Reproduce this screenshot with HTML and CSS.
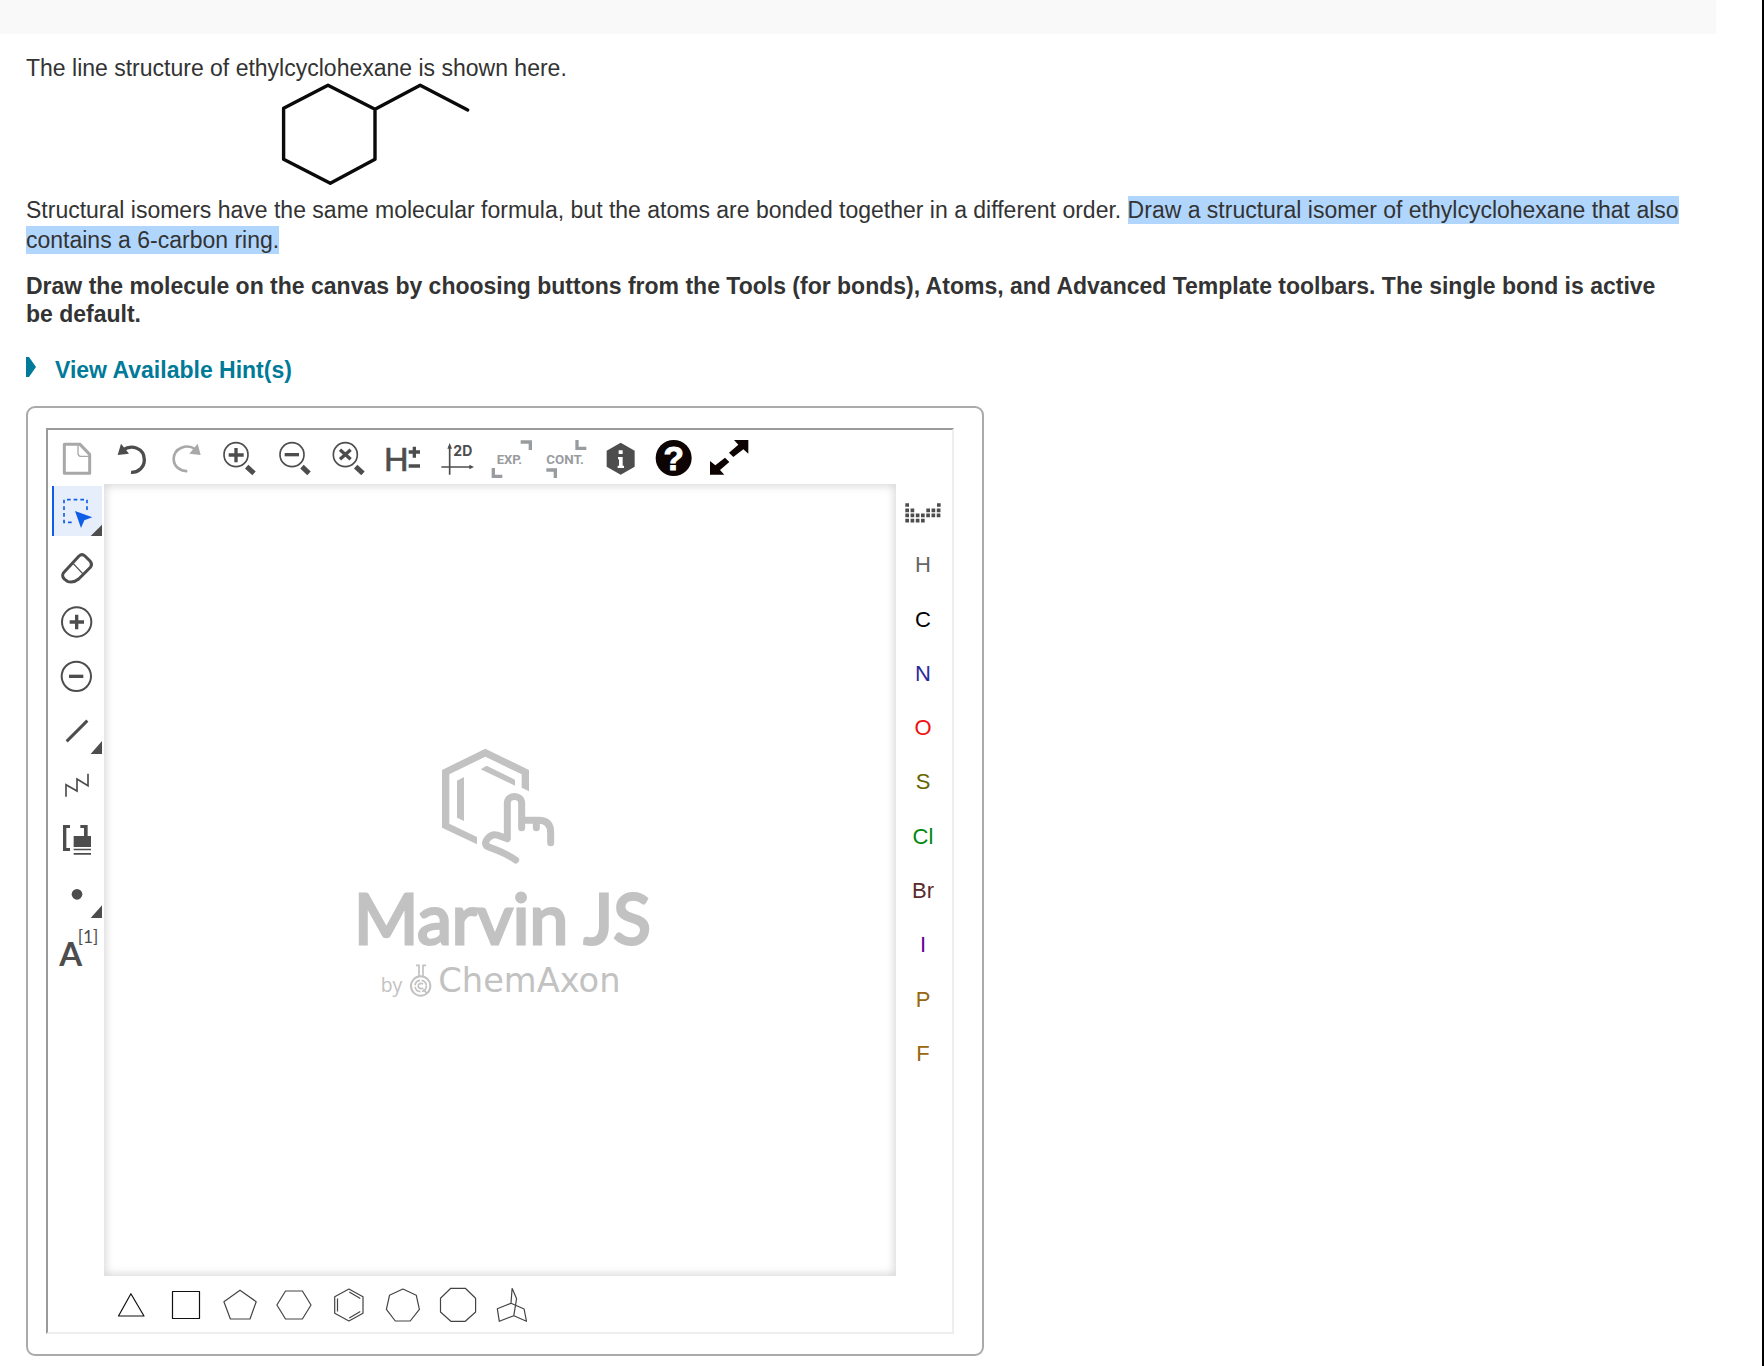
FILE: index.html
```html
<!DOCTYPE html>
<html lang="en">
<head>
<meta charset="utf-8">
<title>Structural isomers</title>
<link rel="stylesheet" href="styles.css">
</head>
<body>
<div class="page">
  <header class="band"></header>
  <main class="content">
    <p class="text">The line structure of ethylcyclohexane is shown here.</p>
    <svg class="molecule" viewBox="280 83 192 112" role="img" aria-label="Ethylcyclohexane">
      <path d="M375 109.3L328 85.3L283.6 108.3V159.3L330.3 183.3L375 159.3V109.3L420.2 85.3L467.7 110"/>
    </svg>
    <p class="text">Structural isomers have the same molecular formula, but the atoms are bonded together in a different order. <mark>Draw a structural isomer of ethylcyclohexane that also contains a 6-carbon ring.</mark></p>
    <p class="instructions">Draw the molecule on the canvas by choosing buttons from the Tools (for bonds), Atoms, and Advanced Template toolbars. The single bond is active be default.</p>
    <a class="hint" href="#hints"><svg class="hint-arrow" viewBox="0 0 10 20"><path d="M0 0L3 0L10 10L3 20H0Z"/></svg>View Available Hint(s)</a>

    <section class="panel">
      <div class="editor">
        <div class="toolbar" role="toolbar" aria-label="General">
          <button class="tool muted" aria-label="New"><svg viewBox="96 96 150 150"><path class="line" stroke-width="9" stroke-linejoin="round" d="M133 133H180L209 163V220H133Z"/><path class="line" stroke-width="4" d="M174 136V160Q174 169 182 169H208"/></svg></button>
          <button class="tool" aria-label="Undo"><svg viewBox="259 96 150 150"><path d="M294 165L304 131L328 161Z"/><path class="line" stroke-width="10" d="M310 150C335 133 374 143 374 180A38 37 0 0 1 334 217"/></svg></button>
          <button class="tool muted" aria-label="Redo"><svg viewBox="422 96 150 150"><path d="M541 165L532 131L507 161Z"/><path class="line" stroke-width="8" d="M524 147C500 131 461 143 460 177A38 36 0 0 0 501 213"/></svg></button>
          <button class="tool" aria-label="Zoom in"><svg viewBox="586 96 150 150"><circle class="line" cx="649" cy="164" r="36" stroke-width="5"/><path class="line" stroke-width="10" d="M627 165H672M649 144V187"/><path class="line" stroke-width="15" d="M681 200L703 220"/></svg></button>
          <button class="tool" aria-label="Zoom out"><svg viewBox="749 96 150 150"><circle class="line" cx="815" cy="164" r="36" stroke-width="5"/><path class="line" stroke-width="10" d="M793 164H836"/><path class="line" stroke-width="15" d="M845 200L866 220"/></svg></button>
          <button class="tool" aria-label="Zoom to fit"><svg viewBox="912 96 150 150"><circle class="line" cx="976" cy="164" r="36" stroke-width="5"/><path class="line" stroke-width="10" d="M960 149L992 178M992 149L960 178"/><path class="line" stroke-width="15" d="M1007 200L1029 220"/></svg></button>
          <button class="tool" aria-label="Explicit hydrogens"><svg viewBox="-64 96 150 150"><text class="arial heavy" x="-46" y="212" font-size="102">H</text><path class="line" stroke-width="10" d="M28 156H62M45 140V173M28 198H62"/></svg></button>
          <button class="tool" aria-label="Clean 2D"><svg viewBox="99 96 150 150"><path class="line" stroke-width="5" d="M149 140V224M124 201H212"/><path d="M142 146L149 129L156 146ZM208 194L222 201L208 208Z"/><text class="inter" x="160" y="169" font-size="42">2D</text></svg></button>
          <button class="tool cool" aria-label="Expand groups"><svg viewBox="262 96 150 150"><path class="line" stroke-width="10" d="M363 126H392V150M281 204V229H308"/><text class="roboto" x="291" y="191" font-size="39">EXP.</text></svg></button>
          <button class="tool cool" aria-label="Contract groups"><svg viewBox="425 96 150 150"><path class="line" stroke-width="10" d="M530 120V145H558M438 210H465V234"/><text class="roboto" x="438" y="191" font-size="40">CONT.</text></svg></button>
          <button class="tool" aria-label="About"><svg viewBox="589 96 150 150"><path d="M663 128L705 152V200L663 224L621 200V152Z"/><path fill="#fff" d="M657 151H669V162H657ZM655 171H669V197H673V204H654V197H658V178H655Z"/></svg></button>
          <button class="tool black" aria-label="Help"><svg viewBox="752 96 150 150"><circle cx="823" cy="174" r="54"/><text class="arial question" x="823" y="209" font-size="100" text-anchor="middle">?</text></svg></button>
          <button class="tool black" aria-label="Full screen"><svg viewBox="915 96 150 150"><path d="M1002 120H1045V161L1030 148L1000 171L987 158L1015 134ZM930 183L946 196L975 173L988 186L960 210L973 224H930Z"/></svg></button>
        </div>

        <div class="side-tools" role="toolbar" aria-label="Tools">
          <button class="tool active" aria-label="Select"><svg viewBox="96 48 150 150"><path class="line" stroke-width="5" stroke-dasharray="11 9" d="M155 157H132V89H201V120"/><path d="M165 123L217 142L193 151L183 174Z"/><path class="corner" d="M246 164V198H212Z"/></svg></button>
          <button class="tool" aria-label="Erase"><svg viewBox="96 211 150 150"><path class="line" stroke-width="9" stroke-linejoin="round" d="M130 307L177 256Q186 248 195 256L210 271Q218 280 212 289L176 325Q160 338 142 332Q122 320 130 307Z"/><path class="line" stroke-width="4" d="M160 279L188 309"/></svg></button>
          <button class="tool" aria-label="Increase charge"><svg viewBox="96 375 150 150"><circle class="line" cx="170" cy="456" r="44" stroke-width="6"/><path class="line" stroke-width="10" d="M149 456H192M170 434V478"/></svg></button>
          <button class="tool" aria-label="Decrease charge"><svg viewBox="96 539 150 150"><circle class="line" cx="169" cy="618" r="44" stroke-width="6"/><path class="line" stroke-width="10" d="M147 618H190"/></svg></button>
          <button class="tool" aria-label="Single bond"><svg viewBox="96 -18 150 150"><path class="line" stroke-width="9" d="M140 94L202 32"/><path class="corner" d="M246 93V132H212Z"/></svg></button>
          <button class="tool" aria-label="Chain"><svg viewBox="96 146 150 150"><path class="line" stroke-width="5" d="M138 259V223L171 242V206L204 226V190"/></svg></button>
          <button class="tool" aria-label="Bracket"><svg viewBox="96 309 150 150"><path d="M129 345H150V354H139V414H150V423H129ZM181 345H203V378H213V411H161V378H192V354H181ZM161 416H213V421H161ZM161 429H213V434H161Z"/></svg></button>
          <button class="tool" aria-label="Atom property"><svg viewBox="96 472 150 150"><circle cx="171" cy="551" r="16"/><path class="corner" d="M246 584V622H212Z"/></svg></button>
          <button class="tool" aria-label="Attached data"><svg viewBox="96 636 150 150"><text class="lato" x="118" y="768" font-size="99">A</text><text class="lato light" x="173" y="698" font-size="52">[1]</text></svg></button>
        </div>

        <div class="canvas">
          <svg class="logo" viewBox="0 0 960 840" role="img" aria-label="Marvin JS by ChemAxon">
            <path d="M567 184V120L436 56L306 120V293L411 343V321L328 281V133L436 80L545 133V173ZM351 152L372 141V273L351 263ZM422 118L440 107L525 149V167Z"/>
            <path class="line" stroke-width="21" stroke-linecap="round" stroke-linejoin="round" d="M527 390C497 368 470 362 440 348C428 338 450 309 471 315L502 326V220C502 193 545 193 545 220V293M550 271H596Q632 271 632 308V338M589 275V293"/>
            <text class="lato brand" x="42" y="643" font-size="208">Marvin JS</text>
            <text class="open" x="122" y="787" font-size="58">by</text>
            <path class="line" stroke-width="5" d="M228 706H237V738M258 706H249V738"/>
            <circle class="line" cx="242" cy="768" r="29" stroke-width="6"/>
            <circle class="line" cx="242" cy="768" r="17" stroke-width="5" stroke-dasharray="22 5"/>
            <path class="line" stroke-width="5" d="M249 763A8 8 0 1 0 249 773M250 778L262 792"/>
            <text class="deja" x="295" y="786" font-size="101">ChemAxon</text>
          </svg>
        </div>

        <div class="atoms" role="toolbar" aria-label="Atoms">
          <button class="tool" aria-label="Periodic table"><svg viewBox="84 258 150 150"><path class="line" stroke-width="11" stroke-dasharray="11 4.700" d="M106 315H118M201 315H213M106 331H134M169 331H213M106 346H213M106 362H165"/></svg></button>
          <button class="tool h">H</button>
          <button class="tool c">C</button>
          <button class="tool n">N</button>
          <button class="tool o">O</button>
          <button class="tool s">S</button>
          <button class="tool cl">Cl</button>
          <button class="tool br">Br</button>
          <button class="tool i">I</button>
          <button class="tool p">P</button>
          <button class="tool p">F</button>
        </div>

        <div class="templates" role="toolbar" aria-label="Templates">
          <button class="tool" aria-label="Cyclopropane"><svg viewBox="106 1280 50 50"><path class="ring dark" d="M130.900 1293.700L118.500 1316H144Z"/></svg></button>
          <button class="tool" aria-label="Cyclobutane"><svg viewBox="160 1280 50 50"><path class="ring dark" d="M172.500 1291.500H199.500V1318.500H172.500Z"/></svg></button>
          <button class="tool" aria-label="Cyclopentane"><svg viewBox="215 1280 50 50"><path class="ring" d="M240 1290.300L256.200 1301.700L250 1319H230.400L223.900 1301.700Z"/></svg></button>
          <button class="tool" aria-label="Cyclohexane"><svg viewBox="269 1280 50 50"><path class="ring" d="M285.500 1291H302.400L311 1305L302.400 1319H285.500L276.900 1305Z"/></svg></button>
          <button class="tool" aria-label="Benzene"><svg viewBox="324 1280 50 50"><path class="ring" d="M348.900 1289L363 1296.700V1313.300L348.900 1321L334.700 1313.300V1296.700ZM337.500 1298.500V1311.500M349.300 1292L360.300 1298.500M349.300 1318L360.300 1311.500"/></svg></button>
          <button class="tool" aria-label="Cycloheptane"><svg viewBox="378 1280 50 50"><path class="ring" d="M402.900 1289L416.300 1295.300L419.400 1309.300L410.200 1321H395.300L386.400 1309.300L389.500 1295.300Z"/></svg></button>
          <button class="tool" aria-label="Cyclooctane"><svg viewBox="433 1280 50 50"><path class="ring" d="M450.800 1288.300H465.300L475.600 1298.300V1312L465.300 1321.300H450.800L440.500 1312V1298.300Z"/></svg></button>
          <button class="tool" aria-label="Bicyclooctane"><svg viewBox="487 1280 50 50"><path class="ring" d="M512.100 1288.300L511 1303.300L497.300 1308.700L499.300 1321.300L513.800 1315.700L526.500 1321.300L524.100 1309L511 1303.300M512.100 1288.300L516.600 1298.700L513.800 1315.700"/></svg></button>
        </div>
      </div>
    </section>
  </main>
</div>
</body>
</html>
```
FILE: styles.css
```css
* { box-sizing: border-box; }

body {
  margin: 0;
  min-height: 100vh;
  border-right: 2px solid #000;
  background: #fff;
  color: #333;
  font-family: "Liberation Sans", Arial, sans-serif;
  font-size: 23px;
}

.page { margin-right: 46px; padding-bottom: 8px; }
.band { height: 34px; background: #f9f9f9; }
.content { padding: 19px 0 0 26px; }

.text { margin: 0; line-height: 30px; }
.text mark { padding: 1px 0; background: #b1d6fd; color: inherit; }

.molecule {
  display: block;
  width: 192px;
  height: 112px;
  margin-left: 254px;
  overflow: visible;
}
.molecule path { fill: none; stroke: #0a0a0a; stroke-width: 3.4; stroke-linejoin: round; stroke-linecap: round; }

.instructions { margin: 17px 40px 28px 0; line-height: 28px; font-weight: bold; }

.hint {
  display: flex;
  align-items: center;
  width: fit-content;
  line-height: 28px;
  font-weight: bold;
  color: #007a99;
  text-decoration: none;
}
.hint-arrow { width: 10px; height: 20px; margin: 0 19px 6px 0; fill: currentColor; }

.panel {
  max-width: 958px;
  margin-top: 22px;
  padding: 20px 28px 20px 18px;
  border: 2px solid #aaa;
  border-radius: 9px;
}

.editor {
  display: grid;
  grid-template-columns: 56px minmax(0, 1fr) 56px;
  grid-template-rows: 54px auto 56px;
  border: 2px solid;
  border-color: #9a9a9a #eee #eee #9a9a9a;
  color: #4d4d4d;
}

.toolbar, .templates { display: flex; align-items: center; justify-content: space-between; }
.toolbar { grid-column: 1 / -1; max-width: 707px; padding: 0 0 0 4px; }
.templates { grid-column: 2 / -1; max-width: 433px; padding: 2px 0 0 2px; }

.side-tools, .atoms { display: flex; flex-direction: column; justify-content: space-between; padding-top: 2px; }
.side-tools { height: 488px; padding-left: 4px; }
.atoms { height: 595px; padding-left: 2px; }

.canvas {
  display: flex;
  align-items: center;
  justify-content: center;
  aspect-ratio: 1;
  padding-bottom: 20px;
  box-shadow: inset 0 0 8px 2px #d8d8d8;
}

.tool {
  flex: none;
  width: 50px;
  height: 50px;
  padding: 0;
  border: 0;
  background: none;
  color: inherit;
  font-family: inherit;
  font-size: 22px;
  line-height: 50px;
}
.tool svg { display: block; width: 50px; height: 50px; fill: currentColor; }
.tool .line, .logo .line { fill: none; stroke: currentColor; }
.tool .corner { fill: #4d4d4d; }
.tool .ring { fill: none; stroke: #444; stroke-width: 1.2; stroke-linejoin: round; }
.tool .ring.dark { stroke: #111; }

.muted { color: #a8a8a8; }
.cool { color: #999c9f; }
.black { color: #0d0303; }
.active { background: #e6eefb; color: #0f5fe6; box-shadow: inset 2px 0 #0f5fe6; }

.arial { font-family: "Liberation Sans", Arial, sans-serif; }
.heavy { stroke: currentColor; stroke-width: 2; }
.question { fill: #fff; stroke: #fff; stroke-width: 3; font-weight: bold; }
.inter { font-family: Inter, sans-serif; font-weight: 700; }
.roboto { font-family: Roboto, sans-serif; font-weight: bold; }
.lato { font-family: Lato, sans-serif; font-weight: bold; }
.lato.light { font-weight: normal; }
.lato.brand { font-weight: normal; stroke: currentColor; stroke-width: 9; }
.open { font-family: "Open Sans", sans-serif; }
.deja { font-family: "DejaVu Sans", sans-serif; }

.logo { width: 320px; height: 280px; color: #c2c2c2; fill: currentColor; overflow: visible; }

.h { color: #666; }
.c { color: #000; }
.n { color: #2b2b99; }
.o { color: #ee1111; }
.s { color: #666600; }
.cl { color: #008811; }
.br { color: #5c2a2a; }
.i { color: #660099; }
.p { color: #996611; }
```
